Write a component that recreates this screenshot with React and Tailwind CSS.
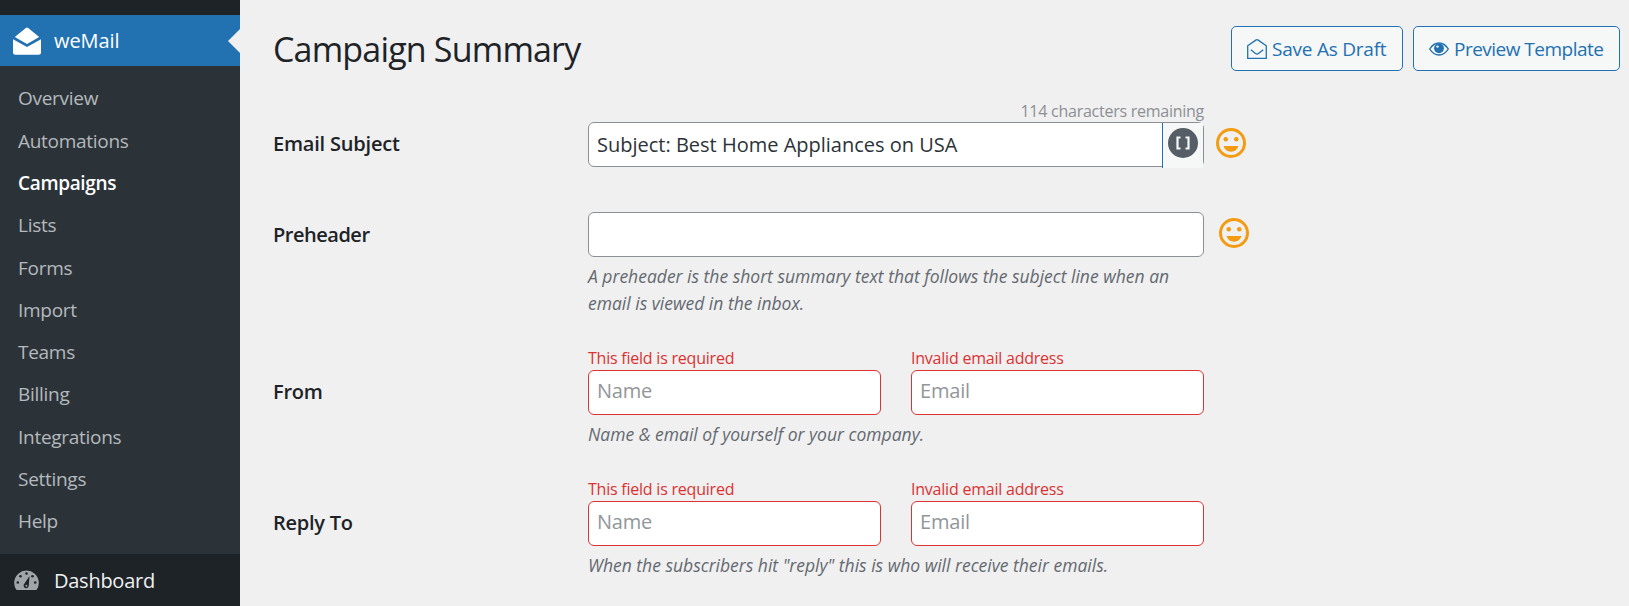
const NAV_ITEMS = [
  'Overview',
  'Automations',
  'Campaigns',
  'Lists',
  'Forms',
  'Import',
  'Teams',
  'Billing',
  'Integrations',
  'Settings',
  'Help',
]

const ACTIVE_ITEM = 'Campaigns'

function MailIcon() {
  return (
    <svg viewBox="0 0 28 28" className="w-7 h-7" fill="#fff">
      <path d="M1.8 10 12.800 1a2 2 0 0 1 2.400 0l11 9L14 17z" />
      <path d="M0 12.300 14 20l14-7.700v13a2.500 2.500 0 0 1-2.500 2.500h-23A2.500 2.500 0 0 1 0 25.300z" />
    </svg>
  )
}

function GaugeIcon() {
  return (
    <svg viewBox="0 0 25 20" className="w-[25px] h-5">
      <path d="M2.500 20A12.300 12.300 0 1 1 22.500 20z" fill="#a0a5aa" />
      <g fill="#1d2327">
        <circle cx="12.500" cy="3.500" r="1.300" />
        <circle cx="6.500" cy="6.300" r="1.300" />
        <circle cx="18.500" cy="6.300" r="1.300" />
        <circle cx="3.800" cy="12.500" r="1.300" />
        <circle cx="21.200" cy="12.500" r="1.300" />
        <path d="M15.500 6 14.800 15.500a2.600 2.600 0 1 1-4.300-1.900z" />
      </g>
      <circle cx="12.400" cy="15.700" r="1" fill="#a0a5aa" />
    </svg>
  )
}

function DraftIcon() {
  return (
    <svg viewBox="0 0 20 20" className="w-5 h-5 shrink-0" fill="none" stroke="currentColor" strokeWidth="1.3">
      <path d="M.7 6.800 8.800 1.100a2.200 2.200 0 0 1 2.400 0l8.100 5.700v12.500H.7z" />
      <path d="m3.800 10.800 4.700 3.800a2.400 2.400 0 0 0 3 0l4.700-3.800" />
    </svg>
  )
}

function EyeIcon() {
  return (
    <svg viewBox="0 0 20 14" className="w-5 h-3.5 shrink-0">
      <path d="M.7 7Q4.500 1 10 1t9.300 6Q15.500 13 10 13T.7 7z" fill="none" stroke="currentColor" strokeWidth="1.400" />
      <circle cx="10" cy="6.300" r="4.900" fill="currentColor" />
      <circle cx="8.500" cy="4.600" r="1.200" fill="#f6f7f7" />
    </svg>
  )
}

function SmileIcon() {
  return (
    <svg viewBox="2 2 20 20" className="w-[30px] h-[30px] shrink-0" fill="#f39c12">
      <path d="M12 2a10 10 0 1 0 0 20 10 10 0 0 0 0-20zm0 18a8 8 0 1 1 0-16 8 8 0 0 1 0 16z" />
      <circle cx="8.500" cy="9.500" r="1.500" />
      <circle cx="15.500" cy="9.500" r="1.500" />
      <path d="M7 14h10a5.200 5.200 0 0 1-10 0z" />
    </svg>
  )
}

function Sidebar() {
  return (
    <aside className="w-60 shrink-0 flex flex-col bg-[#1d2327] pt-[15px]">
      <div className="relative h-[51px] flex items-center bg-[#2271b1] pl-[13px] text-white">
        <MailIcon />
        <span className="ml-[13px] pt-px text-[20px] tracking-[-0.005em]">weMail</span>
        <svg viewBox="0 0 12 24" className="absolute right-0 top-[14px] w-3 h-6">
          <path d="M12 0v24L0 12z" fill="#f0f0f0" />
        </svg>
      </div>

      <nav className="h-[488px] bg-[#2c3338] pt-[11.5px] pl-[18px] text-[#b4b9be]">
        {NAV_ITEMS.map((item) => (
          <a
            key={item}
            className={
              item === ACTIVE_ITEM
                ? 'flex items-center h-[42.3px] text-[19px] tracking-[-0.018em] font-semibold text-white'
                : 'flex items-center h-[42.3px] text-[19px] tracking-[-0.015em]'
            }
          >
            {item}
          </a>
        ))}
      </nav>

      <div className="flex items-center h-[52px] pl-[14px] text-[#f0f0f1]">
        <GaugeIcon />
        <span className="ml-[15px] pt-px text-[20px] tracking-[-0.013em]">Dashboard</span>
      </div>
    </aside>
  )
}

function OutlineButton({ icon, className, children }) {
  return (
    <button
      className={`h-[45px] flex items-center gap-[5px] pl-[15px] rounded-[5px] border border-[#2271b1] bg-[#f6f7f7] text-[#2271b1] text-[19px] whitespace-nowrap ${className}`}
    >
      {icon}
      <span className="pt-px">{children}</span>
    </button>
  )
}

function Row({ label, labelClass, children }) {
  return (
    <div className="flex">
      <div className={`w-[315px] shrink-0 text-[20px] leading-[28px] font-semibold ${labelClass}`}>
        {label}
      </div>
      {children}
    </div>
  )
}

function Hint({ children }) {
  return <p className="mt-[6px] text-[17.5px] leading-[27px] whitespace-nowrap italic text-[#646970]">{children}</p>
}

function RequiredField({ error, placeholder }) {
  return (
    <div className="w-[293px]">
      <p className="h-[25px] pt-px text-[16px] leading-[25px] tracking-[-0.014em] text-[#dc3232]">{error}</p>
      <input
        placeholder={placeholder}
        className="block w-full h-[45px] px-2 pb-1 rounded-[6px] border border-[#dc3232] bg-white text-[20px] tracking-[-0.01em] placeholder:text-[#929699]"
      />
    </div>
  )
}

function ContactRow({ label, hint }) {
  return (
    <Row label={label} labelClass="pt-[33px] tracking-[-0.013em]">
      <div className="w-[616px]">
        <div className="flex justify-between">
          <RequiredField error="This field is required" placeholder="Name" />
          <RequiredField error="Invalid email address" placeholder="Email" />
        </div>
        <Hint>{hint}</Hint>
      </div>
    </Row>
  )
}

export default function App() {
  return (
    <div className="w-[1629px] h-[606px] flex overflow-hidden bg-[#f0f0f0] text-[#1d2327] font-['Open_Sans','Noto_Sans',sans-serif]">
      <Sidebar />

      <main className="flex-1 pl-[33px] pr-[9px] pt-[26px]">
        <header className="flex items-center justify-between h-[45px]">
          <h1 className="pt-[2px] text-[34px] tracking-[-0.024em] font-normal">Campaign Summary</h1>
          <div className="flex gap-[10px]">
            <OutlineButton icon={<DraftIcon />} className="w-[172px] tracking-[-0.012em]">
              Save As Draft
            </OutlineButton>
            <OutlineButton icon={<EyeIcon />} className="w-[207px] tracking-[-0.027em]">
              Preview Template
            </OutlineButton>
          </div>
        </header>

        <div className="pt-[29px]">
          <Row label="Email Subject" labelClass="pt-[30px] tracking-[-0.01em]">
            <div className="w-[616px]">
              <p className="h-[22px] text-[16px] leading-[22px] tracking-[-0.016em] text-right text-[#8c8f94]">
                114 characters remaining
              </p>
              <div className="relative">
                <input
                  defaultValue="Subject: Best Home Appliances on USA"
                  className="block w-full h-[45px] pl-2 pr-12 rounded-[6px] border border-[#8c8f94] bg-white text-[20px] text-[#2c3338]"
                />
                {/* Shortcode picker sits over the end of the input */}
                <button className="absolute top-px right-px w-[41px] h-[45px] flex justify-center pt-[5px] border-l border-[#2271b1] bg-[#f6f7f7]">
                  <svg viewBox="0 0 30 30" className="w-[30px] h-[30px]">
                    <circle cx="15" cy="15" r="15" fill="#555d66" />
                    <path d="M12.500 9.500H9.500v11h3M17.500 9.500h3v11h-3" fill="none" stroke="#f6f7f7" strokeWidth="2.200" />
                  </svg>
                </button>
              </div>
            </div>
            <div className="pt-[28px] pl-3">
              <SmileIcon />
            </div>
          </Row>

          <div className="pt-[45px]">
            <Row label="Preheader" labelClass="pt-[9px] tracking-[-0.024em]">
              <div className="w-[616px]">
                <input className="block w-full h-[45px] px-2 rounded-[6px] border border-[#8c8f94] bg-white" />
                <Hint>
                  A preheader is the short summary text that follows the subject line when an
                  <br />
                  email is viewed in the inbox.
                </Hint>
              </div>
              <div className="pt-[6px] pl-[15px]">
                <SmileIcon />
              </div>
            </Row>
          </div>

          <div className="pt-[28px]">
            <ContactRow label="From" hint="Name & email of yourself or your company." />
          </div>
          <div className="pt-[28px]">
            <ContactRow label="Reply To" hint={'When the subscribers hit "reply" this is who will receive their emails.'} />
          </div>
        </div>
      </main>
    </div>
  )
}
